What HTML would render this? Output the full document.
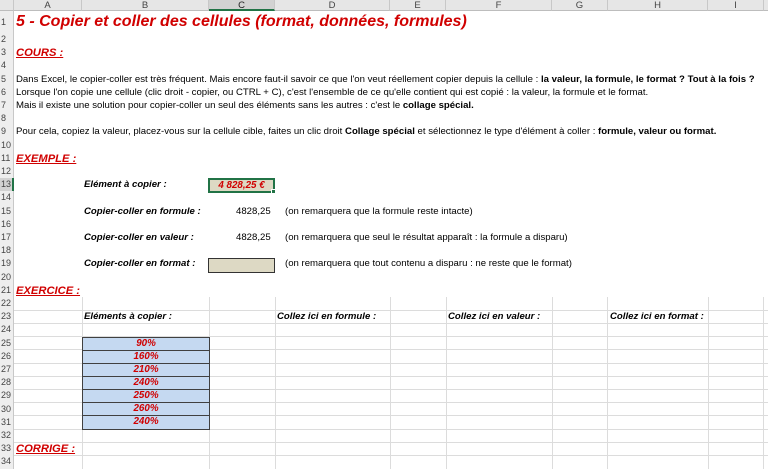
<!DOCTYPE html>
<html><head><meta charset="utf-8"><style>
*{margin:0;padding:0;box-sizing:border-box}
body{width:768px;height:469px;overflow:hidden;background:#fff;position:relative;font-family:"Liberation Sans",Arial,sans-serif;font-size:9.6px;color:#000}
.a{position:absolute;white-space:nowrap}
.ch{position:absolute;top:0;height:11px;background:#e6e6e6;border-right:1px solid #c8c8c8;border-bottom:1px solid #bdbdbd;font-size:9.5px;color:#444;text-align:center;line-height:11px}
.rh{position:absolute;left:0;width:14px;background:#eeeeee;border-right:1px solid #c8c8c8;font-size:9px;color:#444;text-align:left;padding-left:1px}
.t{font-size:9.6px;line-height:13px}
.sec{color:#d00000;font-weight:bold;font-style:italic;text-decoration:underline;font-size:11.2px}
.bi{font-weight:bold;font-style:italic}
.hl{position:absolute;left:14px;width:754px;height:1px;background:#dcdcdc}
.vl{position:absolute;top:297px;height:172px;width:1px;background:#dcdcdc}
.bc{position:absolute;left:82px;width:128px;height:14px;background:#c5d9f1;border:1px solid #404040;color:#d00000;font-weight:bold;font-style:italic;text-align:center;line-height:12px;font-size:9.8px}
</style></head><body>
<div class="ch" style="left:0;width:14px"></div>
<div class="ch" style="left:14px;width:68px">A</div>
<div class="ch" style="left:82px;width:127px">B</div>
<div class="ch" style="left:209px;width:66px;background:#d2d2d2;border-bottom:2px solid #217346;color:#222">C</div>
<div class="ch" style="left:275px;width:115px">D</div>
<div class="ch" style="left:390px;width:56px">E</div>
<div class="ch" style="left:446px;width:106px">F</div>
<div class="ch" style="left:552px;width:56px">G</div>
<div class="ch" style="left:608px;width:100px">H</div>
<div class="ch" style="left:708px;width:56px">I</div>
<div class="ch" style="left:764px;width:10px"></div>

<div class="rh" style="top:11px;height:22px;line-height:22px">1</div>
<div class="rh" style="top:33px;height:13.2px;line-height:13px">2</div>
<div class="rh" style="top:46.2px;height:13.2px;line-height:13px">3</div>
<div class="rh" style="top:59.4px;height:13.2px;line-height:13px">4</div>
<div class="rh" style="top:72.6px;height:13.2px;line-height:13px">5</div>
<div class="rh" style="top:85.8px;height:13.2px;line-height:13px">6</div>
<div class="rh" style="top:99px;height:13.2px;line-height:13px">7</div>
<div class="rh" style="top:112.2px;height:13.2px;line-height:13px">8</div>
<div class="rh" style="top:125.4px;height:13.2px;line-height:13px">9</div>
<div class="rh" style="top:138.6px;height:13.2px;line-height:13px">10</div>
<div class="rh" style="top:151.8px;height:13.2px;line-height:13px">11</div>
<div class="rh" style="top:165px;height:13.2px;line-height:13px">12</div>
<div class="rh" style="top:178.2px;height:13.2px;line-height:13px;background:#d2d2d2;border-right:2px solid #217346">13</div>
<div class="rh" style="top:191.4px;height:13.2px;line-height:13px">14</div>
<div class="rh" style="top:204.6px;height:13.2px;line-height:13px">15</div>
<div class="rh" style="top:217.8px;height:13.2px;line-height:13px">16</div>
<div class="rh" style="top:231px;height:13.2px;line-height:13px">17</div>
<div class="rh" style="top:244.2px;height:13.2px;line-height:13px">18</div>
<div class="rh" style="top:257.4px;height:13.2px;line-height:13px">19</div>
<div class="rh" style="top:270.6px;height:13.2px;line-height:13px">20</div>
<div class="rh" style="top:283.8px;height:13.2px;line-height:13px">21</div>
<div class="rh" style="top:297px;height:13.2px;line-height:13px">22</div>
<div class="rh" style="top:310.2px;height:13.2px;line-height:13px">23</div>
<div class="rh" style="top:323.4px;height:13.2px;line-height:13px">24</div>
<div class="rh" style="top:336.6px;height:13.2px;line-height:13px">25</div>
<div class="rh" style="top:349.8px;height:13.2px;line-height:13px">26</div>
<div class="rh" style="top:363px;height:13.2px;line-height:13px">27</div>
<div class="rh" style="top:376.2px;height:13.2px;line-height:13px">28</div>
<div class="rh" style="top:389.4px;height:13.2px;line-height:13px">29</div>
<div class="rh" style="top:402.6px;height:13.2px;line-height:13px">30</div>
<div class="rh" style="top:415.8px;height:13.2px;line-height:13px">31</div>
<div class="rh" style="top:429px;height:13.2px;line-height:13px">32</div>
<div class="rh" style="top:442.2px;height:13.2px;line-height:13px">33</div>
<div class="rh" style="top:455.4px;height:14px;line-height:13px">34</div>

<div class="hl" style="top:310px"></div><div class="hl" style="top:323px"></div>
<div class="hl" style="top:336px"></div><div class="hl" style="top:349px"></div>
<div class="hl" style="top:363px"></div><div class="hl" style="top:376px"></div>
<div class="hl" style="top:389px"></div><div class="hl" style="top:402px"></div>
<div class="hl" style="top:415px"></div><div class="hl" style="top:429px"></div>
<div class="hl" style="top:442px"></div><div class="hl" style="top:455px"></div>
<div class="vl" style="left:82px"></div><div class="vl" style="left:209px"></div>
<div class="vl" style="left:275px"></div><div class="vl" style="left:390px"></div>
<div class="vl" style="left:446px"></div><div class="vl" style="left:552px"></div>
<div class="vl" style="left:607px"></div><div class="vl" style="left:708px"></div>
<div class="vl" style="left:763px"></div>
<div style="position:absolute;left:14px;top:297px;width:68px;height:13px;background:#fff"></div>
<div style="position:absolute;left:14px;top:442.5px;width:68px;height:12.5px;background:#fff"></div>

<div class="a" style="left:16px;top:11px;line-height:22px;font-size:16px;color:#d00000;font-weight:bold;font-style:italic">5 - Copier et coller des cellules (format, données, formules)</div>
<div class="a sec" style="left:16px;top:46px;line-height:14px">COURS :</div>
<div class="a t" style="left:16px;top:72.6px">Dans Excel, le copier-coller est très fréquent. Mais encore faut-il savoir ce que l'on veut réellement copier depuis la cellule : <b>la valeur, la formule, le format ? Tout à la fois ?</b></div>
<div class="a t" style="left:16px;top:85.8px">Lorsque l'on copie une cellule (clic droit - copier, ou CTRL + C), c'est l'ensemble de ce qu'elle contient qui est copié : la valeur, la formule et le format.</div>
<div class="a t" style="left:16px;top:99px">Mais il existe une solution pour copier-coller un seul des éléments sans les autres : c'est le <b>collage spécial.</b></div>
<div class="a t" style="left:16px;top:125.4px">Pour cela, copiez la valeur, placez-vous sur la cellule cible, faites un clic droit <b>Collage spécial</b> et sélectionnez le type d'élément à coller : <b>formule, valeur ou format.</b></div>
<div class="a sec" style="left:16px;top:151.8px;line-height:14px">EXEMPLE :</div>

<div class="a t bi" style="left:84px;top:178.2px">Elément à copier :</div>
<div class="a" style="left:208px;top:177.5px;width:67px;height:15px;background:#ddd9c4;border:2px solid #217346;color:#d00000;font-weight:bold;font-style:italic;text-align:center;line-height:11px;font-size:9.8px">4 828,25 €</div>
<div class="a" style="left:271px;top:189px;width:5px;height:5px;background:#217346;border:1px solid #fff"></div>

<div class="a t bi" style="left:84px;top:204.6px">Copier-coller en formule :</div>
<div class="a t" style="left:236px;top:204.6px">4828,25</div>
<div class="a t" style="left:285px;top:204.6px">(on remarquera que la formule reste intacte)</div>
<div class="a t bi" style="left:84px;top:231px">Copier-coller en valeur :</div>
<div class="a t" style="left:236px;top:231px">4828,25</div>
<div class="a t" style="left:285px;top:231px">(on remarquera que seul le résultat apparaît : la formule a disparu)</div>
<div class="a t bi" style="left:84px;top:257.4px">Copier-coller en format :</div>
<div class="a" style="left:208px;top:257.5px;width:67px;height:15px;background:#ddd9c4;border:1.5px solid #333"></div>
<div class="a t" style="left:285px;top:257.4px">(on remarquera que tout contenu a disparu : ne reste que le format)</div>

<div class="a sec" style="left:16px;top:284px;line-height:14px">EXERCICE :</div>
<div class="a t bi" style="left:84px;top:310.2px">Eléments à copier :</div>
<div class="a t bi" style="left:277px;top:310.2px">Collez ici en formule :</div>
<div class="a t bi" style="left:448px;top:310.2px">Collez ici en valeur :</div>
<div class="a t bi" style="left:610px;top:310.2px">Collez ici en format :</div>

<div class="bc" style="top:337px">90%</div>
<div class="bc" style="top:350px">160%</div>
<div class="bc" style="top:363px">210%</div>
<div class="bc" style="top:376px">240%</div>
<div class="bc" style="top:389px">250%</div>
<div class="bc" style="top:402px">260%</div>
<div class="bc" style="top:415px;height:15px">240%</div>

<div class="a sec" style="left:16px;top:442.2px;line-height:14px">CORRIGE :</div>
</body></html>
